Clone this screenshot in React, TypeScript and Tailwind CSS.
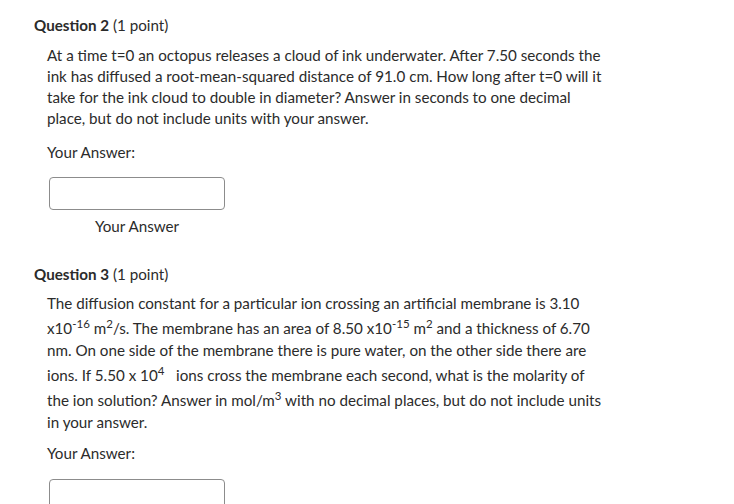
import React from 'react';

const Sup: React.FC<{ children: React.ReactNode }> = ({ children }) => (
  <span className="align-super text-[11.5px] leading-[19px]">{children}</span>
);

const NoWrap: React.FC<{ children: React.ReactNode }> = ({ children }) => (
  <span className="whitespace-nowrap">{children}</span>
);

interface QuestionProps {
  number: number;
  children: React.ReactNode;
  bodyClass?: string;
  answerGap?: string;
  inputGap?: string;
}

const Question: React.FC<QuestionProps> = ({
  number,
  children,
  bodyClass = '',
  answerGap = 'mt-[13px]',
  inputGap = 'mt-[14px]',
}) => (
  <section>
    <h2 className="text-[15.2px] leading-[21px] font-normal">
      <span className="font-bold">Question {number}</span> (1 point)
    </h2>
    <div className="ml-[13px]">
      <p className={`w-[560px] text-[15.2px] ${bodyClass}`}>{children}</p>
      <p className={`${answerGap} text-[15.2px] leading-[21px]`}>Your Answer:</p>
      <div className={`${inputGap} ml-[2px] w-[176px]`}>
        <input
          type="text"
          aria-label="Your Answer"
          className="block w-[176px] h-[33px] rounded-[4px] border border-[#8c8c8c] bg-white"
        />
        <div className="mt-[6px] text-center text-[15.2px] leading-[21px]">Your Answer</div>
      </div>
    </div>
  </section>
);

export default function App() {
  return (
    <div
      className="w-[734px] h-[504px] overflow-hidden bg-white text-[#2b2b2b] pl-[34px] pt-[15px]"
      style={{ fontFamily: 'Lato, "Open Sans", sans-serif' }}
    >
      <Question number={2} bodyClass="mt-[9px] leading-[21px]">
        At a time t=0 an octopus releases a cloud of ink underwater. After 7.50 seconds the ink has
        diffused a root-mean-squared distance of 91.0 cm. How long after t=0 will it take for the
        ink cloud to double in diameter? Answer in seconds to one decimal place, but do not include
        units with your answer.
      </Question>
      <div className="mt-[27px]">
        <Question
          number={3}
          bodyClass="mt-[7px] leading-[22px]"
          answerGap="mt-[10px]"
          inputGap="mt-[15px]"
        >
          The diffusion constant for a particular ion crossing an artificial membrane is 3.10{' '}
          <NoWrap>
            x10<Sup>-16</Sup>
          </NoWrap>{' '}
          <NoWrap>
            m<Sup>2</Sup>/s.
          </NoWrap>{' '}
          The membrane has an area of 8.50{' '}
          <NoWrap>
            x10<Sup>-15</Sup>
          </NoWrap>{' '}
          <NoWrap>
            m<Sup>2</Sup>
          </NoWrap>{' '}
          and a thickness of 6.70 nm. On one side of the membrane there is pure water, on the other
          side there are ions. If 5.50 x{' '}
          <NoWrap>
            10<Sup>4</Sup>
          </NoWrap>
          &nbsp;&nbsp; ions cross the membrane each second, what is the molarity of the ion
          solution? Answer in{' '}
          <NoWrap>
            mol/m<Sup>3</Sup>
          </NoWrap>{' '}
          with no decimal places, but do not include units in your answer.
        </Question>
      </div>
    </div>
  );
}
